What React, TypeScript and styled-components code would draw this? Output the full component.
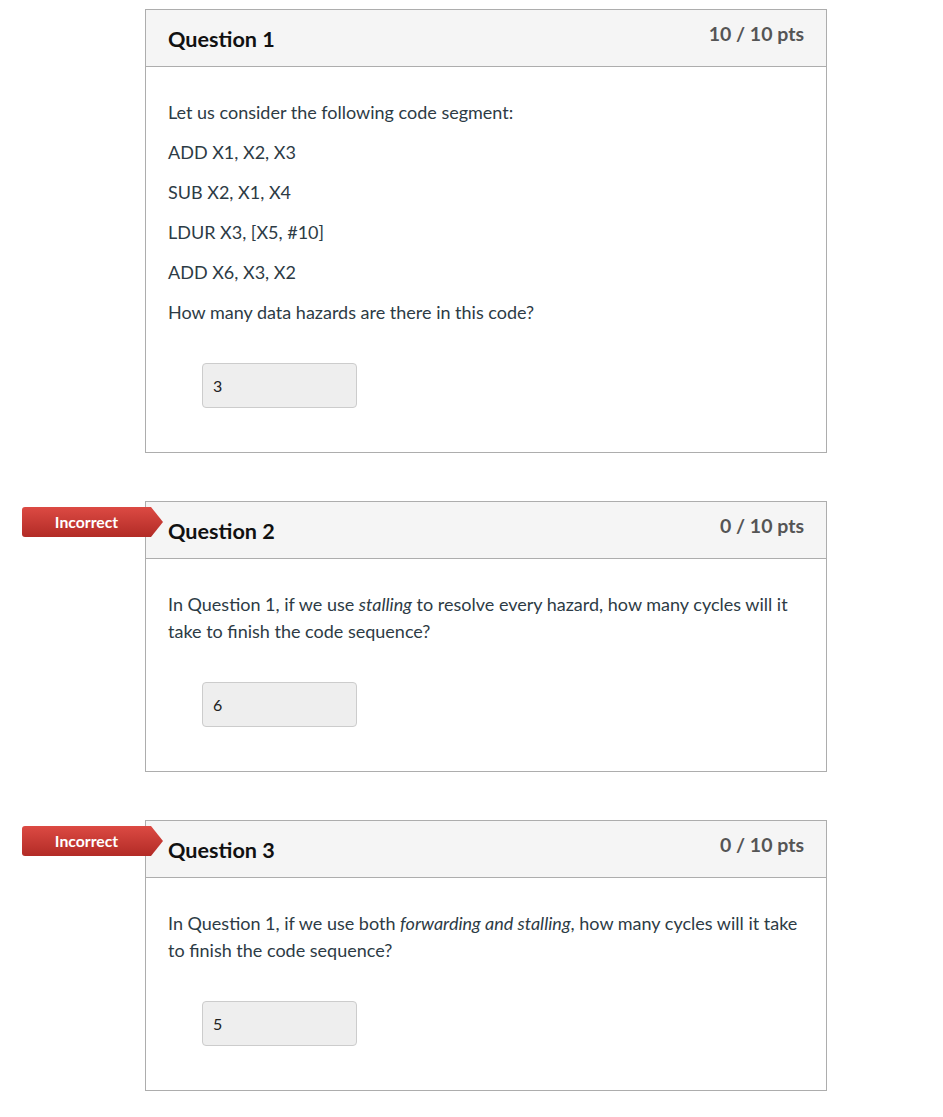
import React from "react";
import styled, { createGlobalStyle } from "styled-components";

const Global = createGlobalStyle`
  html, body { margin: 0; padding: 0; background: #fff; }
  body { font-family: Lato, "Open Sans", "Liberation Sans", sans-serif; color: #2d3b45; }
  * { box-sizing: border-box; }
`;

const Page = styled.div`
  padding: 9px 0 20px 145px;
  display: flex;
  flex-direction: column;
  gap: 48px;
`;

const Card = styled.div`
  position: relative;
  width: 682px;
  border: 1px solid #adadad;
  background: #fff;
`;

const Header = styled.div`
  height: 58px;
  margin: -1px 0 0;
  padding: 0 22px;
  background: #f5f5f5;
  border-top: 1px solid #adadad;
  border-bottom: 1px solid #adadad;
  display: flex;
  justify-content: space-between;
  align-items: flex-start;
`;

const Title = styled.h2`
  margin: 16px 0 0;
  font-size: 21.6px;
  line-height: 26px;
  font-weight: 700;
  color: #111;
`;

const Points = styled.div`
  margin-top: 12px;
  font-size: 19.5px;
  line-height: 24px;
  font-weight: 700;
  color: #555;
`;

const Body = styled.div`
  padding: 19px 22px 44px;
`;

const P = styled.p`
  margin: 13px 0;
  font-size: 18px;
  line-height: 27px;
`;

const Answer = styled.div`
  margin: 37px 0 0 34px;
  width: 155px;
  height: 45px;
  padding: 0 10px;
  display: flex;
  align-items: center;
  background: #eeeeee;
  border: 1px solid #cccccc;
  border-radius: 4px;
  font-family: Lato, "Liberation Sans", Arial, sans-serif;
  font-size: 16px;
  color: #222;
`;

const Badge = styled.div`
  position: absolute;
  left: -124px;
  top: 5px;
  width: 129px;
  height: 30px;
  border-radius: 3px 0 0 3px;
  background: linear-gradient(#dc4a43, #b22b26);
  color: #fff;
  font-weight: 700;
  font-size: 15.75px;
  display: flex;
  align-items: center;
  justify-content: center;
  padding-bottom: 2px;
  &::after {
    content: "";
    position: absolute;
    right: -12px;
    top: 0;
    width: 12px;
    height: 30px;
    background: linear-gradient(#dc4a43, #b22b26);
    clip-path: polygon(0 0, 100% 50%, 0 100%);
  }
`;

type Q = {
  n: number;
  pts: string;
  incorrect?: boolean;
  paras: React.ReactNode[];
  answer: string;
};

const questions: Q[] = [
  {
    n: 1,
    pts: "10 / 10 pts",
    paras: [
      "Let us consider the following code segment:",
      "ADD X1, X2, X3",
      "SUB X2, X1, X4",
      "LDUR X3, [X5, #10]",
      "ADD X6, X3, X2",
      "How many data hazards are there in this code?",
    ],
    answer: "3",
  },
  {
    n: 2,
    pts: "0 / 10 pts",
    incorrect: true,
    paras: [
      <>
        In Question 1, if we use <em>stalling</em> to resolve every hazard, how many cycles will it take to finish the code sequence?
      </>,
    ],
    answer: "6",
  },
  {
    n: 3,
    pts: "0 / 10 pts",
    incorrect: true,
    paras: [
      <>
        In Question 1, if we use both <em>forwarding and stalling</em>, how many cycles will it take to finish the code sequence?
      </>,
    ],
    answer: "5",
  },
];

export default function App() {
  return (
    <>
      <Global />
      <Page>
        {questions.map((q) => (
          <Card key={q.n}>
            {q.incorrect && <Badge>Incorrect</Badge>}
            <Header>
              <Title>Question {q.n}</Title>
              <Points>{q.pts}</Points>
            </Header>
            <Body>
              {q.paras.map((p, i) => (
                <P key={i}>{p}</P>
              ))}
              <Answer>{q.answer}</Answer>
            </Body>
          </Card>
        ))}
      </Page>
    </>
  );
}
